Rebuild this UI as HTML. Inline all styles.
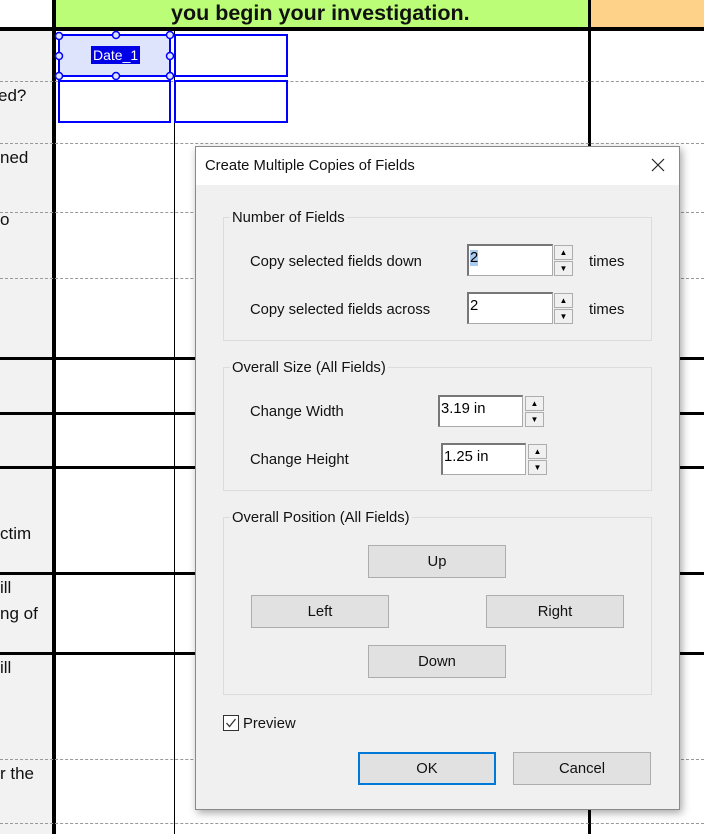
<!DOCTYPE html>
<html><head><meta charset="utf-8"><style>
*{margin:0;padding:0;box-sizing:border-box}
body{width:704px;height:834px;overflow:hidden;background:#fff;position:relative;font-family:"Liberation Sans",sans-serif}
.a{position:absolute}
.hl{position:absolute;height:0}
.dash{border-top:1px dashed #999}
.thick{height:4px;background:#000}
.lt{position:absolute;left:0;font-size:17px;color:#111}
.d{font-size:14.8px;color:#111;position:absolute;margin-top:1px}
.gb{position:absolute;border:1px solid #dcdcdc}
.leg{position:absolute;background:#f0f0f0;padding:0 2px;font-size:14.8px;color:#111;margin-top:1px}
.inp{position:absolute;background:#fff;border:1px solid #aaa;border-top:2px solid #777;border-left:2px solid #777;font-size:14.8px;padding-left:1px;line-height:24px}
.sp{position:absolute;width:19px;height:15px;background:#f0f0f0;border:1px solid #adadad;font-size:8px;text-align:center;line-height:13px;color:#000}
.btn{position:absolute;width:138px;height:33px;background:#e1e1e1;border:1px solid #adadad;font-size:14.8px;display:flex;align-items:center;justify-content:center;color:#111;padding-top:1px}
</style></head><body>
<div class="a" style="left:0;top:0;width:53px;height:834px;background:#f2f2f2"></div>
<div class="a" style="left:0;top:0;width:53px;height:28px;background:#fff"></div>
<div class="a" style="left:55px;top:0;width:534px;height:28px;background:#bbfd76"></div>
<div class="a" style="left:591px;top:0;width:113px;height:28px;background:#ffd28a"></div>
<div class="a" style="left:171px;top:1px;font-size:21.5px;font-weight:bold;color:#111">you begin your investigation.</div>
<div class="hl thick" style="left:0;top:27px;width:704px"></div>
<div class="a" style="left:52px;top:0;width:4px;height:834px;background:#000"></div>
<div class="a" style="left:174px;top:29px;width:1px;height:805px;background:#000"></div>
<div class="a" style="left:588px;top:0;width:3px;height:834px;background:#000"></div>
<div class="hl dash" style="left:0;top:81px;width:704px"></div>
<div class="hl dash" style="left:0;top:143px;width:704px"></div>
<div class="hl dash" style="left:0;top:212px;width:704px"></div>
<div class="hl dash" style="left:0;top:278px;width:704px"></div>
<div class="hl thick" style="left:0;top:357px;width:704px;height:3px"></div>
<div class="hl thick" style="left:0;top:412px;width:704px;height:3px"></div>
<div class="hl thick" style="left:0;top:466px;width:704px;height:3px"></div>
<div class="hl thick" style="left:0;top:572px;width:704px;height:3px"></div>
<div class="hl thick" style="left:0;top:652px;width:704px;height:3px"></div>
<div class="hl dash" style="left:0;top:759px;width:704px"></div>
<div class="hl dash" style="left:0;top:823px;width:704px"></div>
<div class="lt" style="top:86px;left:-2px">ed?</div>
<div class="lt" style="top:148px">ned</div>
<div class="lt" style="top:210px">o</div>
<div class="lt" style="top:524px">ctim</div>
<div class="lt" style="top:578px">ill</div>
<div class="lt" style="top:604px">ng of</div>
<div class="lt" style="top:658px">ill</div>
<div class="lt" style="top:764px">r the</div>
<div class="a" style="left:58px;top:34px;width:113px;height:43px;background:#dde4fb;border:2px solid #00f"></div>
<div class="a" style="left:91px;top:46px;background:#0000e6;color:#fff;font-size:14px;padding:1px 2px">Date_1</div>
<div class="a" style="left:174px;top:34px;width:114px;height:43px;border:2px solid #00f"></div>
<div class="a" style="left:58px;top:80px;width:113px;height:43px;border:2px solid #00f"></div>
<div class="a" style="left:174px;top:80px;width:114px;height:43px;border:2px solid #00f"></div>
<svg class="a" style="left:50px;top:27px" width="130" height="60"><g fill="#dde4fb" stroke="#00f" stroke-width="1.5"><circle cx="9" cy="9" r="3.5"/><circle cx="66" cy="8" r="3.5"/><circle cx="120" cy="8" r="3.5"/><circle cx="9" cy="29" r="3.5"/><circle cx="120" cy="29" r="3.5"/><circle cx="9" cy="49" r="3.5"/><circle cx="66" cy="49" r="3.5"/><circle cx="120" cy="49" r="3.5"/></g></svg>
<div class="a" style="left:195px;top:146px;width:485px;height:664px;background:#f0f0f0;border:1px solid #8a8a8a;box-shadow:2px 3px 8px rgba(0,0,0,.35)"></div>
<div class="a" style="left:196px;top:147px;width:483px;height:38px;background:#fff"></div>
<div class="d" style="left:205px;top:157px">Create Multiple Copies of Fields</div>
<svg class="a" style="left:651px;top:158px" width="14" height="14"><path d="M1 1L13 13M13 1L1 13" stroke="#222" stroke-width="1.2"/></svg>
<div class="gb" style="left:223px;top:217px;width:429px;height:124px"></div>
<div class="leg" style="left:230px;top:209px">Number of Fields</div>
<div class="d" style="left:250px;top:253px">Copy selected fields down</div>
<div class="inp" style="left:467px;top:244px;width:86px;height:32px"><span style="background:#a8cbef">2</span></div>
<div class="sp" style="left:554px;top:245px">▲</div><div class="sp" style="left:554px;top:261px">▼</div>
<div class="d" style="left:589px;top:253px">times</div>
<div class="d" style="left:250px;top:301px">Copy selected fields across</div>
<div class="inp" style="left:467px;top:292px;width:86px;height:32px">2</div>
<div class="sp" style="left:554px;top:293px">▲</div><div class="sp" style="left:554px;top:309px">▼</div>
<div class="d" style="left:589px;top:301px">times</div>
<div class="gb" style="left:223px;top:367px;width:429px;height:124px"></div>
<div class="leg" style="left:230px;top:359px">Overall Size (All Fields)</div>
<div class="d" style="left:250px;top:403px">Change Width</div>
<div class="inp" style="left:438px;top:395px;width:85px;height:32px">3.19 in</div>
<div class="sp" style="left:525px;top:396px">▲</div><div class="sp" style="left:525px;top:412px">▼</div>
<div class="d" style="left:250px;top:451px">Change Height</div>
<div class="inp" style="left:441px;top:443px;width:85px;height:32px">1.25 in</div>
<div class="sp" style="left:528px;top:444px">▲</div><div class="sp" style="left:528px;top:460px">▼</div>
<div class="gb" style="left:223px;top:517px;width:429px;height:178px"></div>
<div class="leg" style="left:230px;top:509px">Overall Position (All Fields)</div>
<div class="btn" style="left:368px;top:545px">Up</div>
<div class="btn" style="left:251px;top:595px">Left</div>
<div class="btn" style="left:486px;top:595px">Right</div>
<div class="btn" style="left:368px;top:645px">Down</div>
<div class="a" style="left:223px;top:715px;width:16px;height:16px;border:1px solid #333;background:#fff"></div>
<svg class="a" style="left:224px;top:716px" width="14" height="14"><path d="M2.5 7L5.5 10.5L11.5 3" fill="none" stroke="#333" stroke-width="1.3"/></svg>
<div class="d" style="left:243px;top:715px">Preview</div>
<div class="btn" style="left:358px;top:752px;border:2px solid #0078d7">OK</div>
<div class="btn" style="left:513px;top:752px">Cancel</div>
</body></html>
